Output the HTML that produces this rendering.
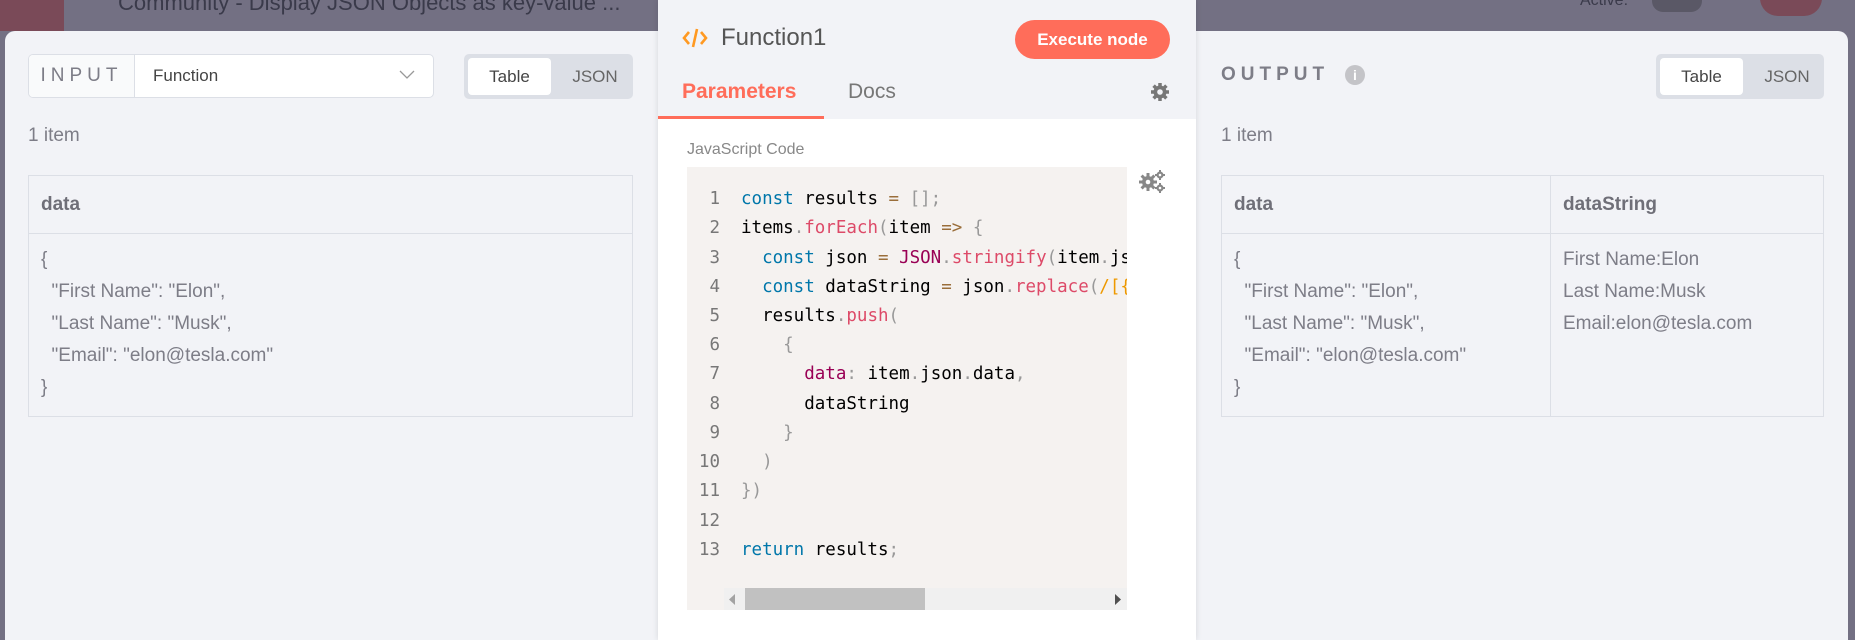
<!DOCTYPE html>
<html><head><meta charset="utf-8"><style>
*{box-sizing:border-box;margin:0;padding:0}
html{width:1855px;height:640px;overflow:hidden}
body{width:1855px;height:640px;overflow:hidden;background:#737083;font-family:"Liberation Sans",sans-serif;position:relative;color:#555}
.abs{position:absolute}
.panel{position:absolute;left:5px;top:31px;width:1843px;height:609px;background:#f2f3f7;border-radius:10px 10px 0 0}
.lbl{font-size:19px;letter-spacing:5px;color:#7d7d87;font-weight:bold}
.sel{left:28px;top:54px;width:406px;height:44px;border:1px solid #dcdfe6;border-radius:5px;background:#fff;overflow:hidden}
.tog{height:45px;width:169px;background:#dcdfe6;border-radius:5px}
.tog .a{position:absolute;left:4px;top:4px;width:83px;height:37px;background:#fff;border-radius:4px;font-size:17px;color:#444;text-align:center;line-height:37px}
.tog .b{position:absolute;left:96px;top:4px;width:70px;line-height:37px;font-size:17px;color:#666;text-align:center}
.items{font-size:19px;color:#7d7d87}
table{border-collapse:collapse;position:absolute;font-size:19px;color:#7d7d87}
td,th{border:1px solid #dcdfe6;text-align:left;vertical-align:top;padding:0 12px}
th{height:58px;vertical-align:middle;font-weight:bold;color:#6f6f78}
td{line-height:32px;padding-top:10px;padding-bottom:8px}
.code{left:687px;top:167px;width:440px;height:443px;background:#f5f2f0;font-family:"DejaVu Sans Mono","Liberation Mono",monospace;font-size:17.5px;overflow:hidden}
.ln{position:absolute;left:0;width:33px;text-align:right;color:#777}
.cl{position:absolute;left:54px;white-space:pre;color:#000}
.k{color:#07a}.f{color:#dd4a68}.p{color:#999}.o{color:#9a6e3a}.m{color:#905}
</style></head><body>
<div class="abs" style="left:0;top:0;width:64px;height:31px;background:#7a4a58"></div>
<div class="abs" style="left:118px;top:-10px;font-size:22px;color:#3a3a4a;white-space:nowrap">Community - Display JSON Objects as key-value ...</div>
<div class="abs" style="left:1580px;top:-8px;font-size:16px;color:#3a3a4a">Active:</div>
<div class="abs" style="left:1652px;top:-10px;width:50px;height:22px;border-radius:11px;background:#5a5866"></div>
<div class="abs" style="left:1760px;top:-20px;width:62px;height:36px;border-radius:18px;background:#7a4a58"></div>

<div class="panel"></div>
<div class="abs sel">
 <div class="abs lbl" style="left:0;top:0;width:106px;height:42px;line-height:42px;text-align:center;background:#f9fafb;border-right:1px solid #dcdfe6;font-weight:normal">INPUT</div>
 <div class="abs" style="left:124px;top:0;line-height:42px;font-size:17px;color:#444">Function</div>
 <svg class="abs" style="left:370px;top:15px" width="16" height="10"><path d="M1 1L8 8L15 1" fill="none" stroke="#999" stroke-width="1.3"/></svg>
</div>
<div class="abs tog" style="left:464px;top:54px"><div class="a">Table</div><div class="b">JSON</div></div>
<div class="abs items" style="left:28px;top:125px">1 item</div>
<table style="left:28px;top:175px;width:605px"><tr><th>data</th></tr>
<tr><td style="height:183px">{<br>&nbsp;&nbsp;"First Name": "Elon",<br>&nbsp;&nbsp;"Last Name": "Musk",<br>&nbsp;&nbsp;"Email": "elon@tesla.com"<br>}</td></tr></table>

<div class="abs" style="left:658px;top:0;width:538px;height:640px;background:#fff;box-shadow:0 0 6px rgba(0,0,0,.12)"></div>
<div class="abs" style="left:658px;top:0;width:538px;height:119px;background:#f2f3f7"></div>
<svg class="abs" style="left:682px;top:27px" width="26" height="22"><path d="M7 5L2 11L7 17M19 5L24 11L19 17" fill="none" stroke="#ff9922" stroke-width="2.6"/><path d="M15 2L11 20" stroke="#ff9922" stroke-width="2.6"/></svg>
<div class="abs" style="left:721px;top:24px;font-size:24px;color:#555">Function1</div>
<div class="abs" style="left:1015px;top:20px;width:155px;height:39px;border-radius:20px;background:#ff6d5a;color:#fff;font-size:17px;font-weight:bold;text-align:center;line-height:39px">Execute node</div>
<div class="abs" style="left:682px;top:80px;font-size:21px;color:#ff6d5a;font-weight:bold">Parameters</div>
<div class="abs" style="left:658px;top:116px;width:166px;height:3px;background:#ff6d5a"></div>
<div class="abs" style="left:848px;top:80px;font-size:21px;color:#777">Docs</div>
<svg class="abs" style="left:1150px;top:82px" width="20" height="20" viewBox="0 0 20 20"><g fill="#777"><circle cx="10" cy="10" r="6.5"/><g stroke="#777" stroke-width="3.5"><path d="M10 1V19M1 10H19M3.6 3.6L16.4 16.4M16.4 3.6L3.6 16.4"/></g></g><circle cx="10" cy="10" r="2.8" fill="#f2f3f7"/></svg>
<div class="abs" style="left:687px;top:141px;font-size:16px;color:#888">JavaScript Code</div>
<div class="abs code">
 <div class="ln" style="top:22px">1</div><div class="cl" style="top:22px"><span class="k">const</span> results <span class="o">=</span> <span class="p">[];</span></div>
 <div class="ln" style="top:51px">2</div><div class="cl" style="top:51px">items<span class="p">.</span><span class="f">forEach</span><span class="p">(</span>item <span class="o">=&gt;</span> <span class="p">{</span></div>
 <div class="ln" style="top:81px">3</div><div class="cl" style="top:81px">  <span class="k">const</span> json <span class="o">=</span> <span class="m">JSON</span><span class="p">.</span><span class="f">stringify</span><span class="p">(</span>item<span class="p">.</span>json<span class="p">.</span>data<span class="p">)</span></div>
 <div class="ln" style="top:110px">4</div><div class="cl" style="top:110px">  <span class="k">const</span> dataString <span class="o">=</span> json<span class="p">.</span><span class="f">replace</span><span class="p">(</span><span style="color:#e90">/[{}]/g</span></div>
 <div class="ln" style="top:139px">5</div><div class="cl" style="top:139px">  results<span class="p">.</span><span class="f">push</span><span class="p">(</span></div>
 <div class="ln" style="top:168px">6</div><div class="cl" style="top:168px"><span class="p">    {</span></div>
 <div class="ln" style="top:197px">7</div><div class="cl" style="top:197px">      <span class="m">data</span><span class="p">:</span> item<span class="p">.</span>json<span class="p">.</span>data<span class="p">,</span></div>
 <div class="ln" style="top:227px">8</div><div class="cl" style="top:227px">      dataString</div>
 <div class="ln" style="top:256px">9</div><div class="cl" style="top:256px"><span class="p">    }</span></div>
 <div class="ln" style="top:285px">10</div><div class="cl" style="top:285px"><span class="p">  )</span></div>
 <div class="ln" style="top:314px">11</div><div class="cl" style="top:314px"><span class="p">})</span></div>
 <div class="ln" style="top:344px">12</div>
 <div class="ln" style="top:373px">13</div><div class="cl" style="top:373px"><span class="k">return</span> results<span class="p">;</span></div>
 <div class="abs" style="left:37px;top:421px;width:403px;height:22px;background:#f0f0f0"></div>
 <div class="abs" style="left:58px;top:421px;width:180px;height:22px;background:#c1c1c1"></div>
 <svg class="abs" style="left:42px;top:427px" width="8" height="11"><path d="M6 0L0 5.5L6 11Z" fill="#a3a3a3"/></svg>
 <svg class="abs" style="left:428px;top:427px" width="8" height="11"><path d="M0 0L6 5.5L0 11Z" fill="#505050"/></svg>
</div>
<svg class="abs" style="left:1138px;top:169px" width="28" height="24" viewBox="0 0 28 24"><g fill="#888"><circle cx="10" cy="13" r="6"/><path d="M10 4V22M1 13H19M3.6 6.6L16.4 19.4M16.4 6.6L3.6 19.4" stroke="#888" stroke-width="3"/><circle cx="22" cy="6" r="3.5"/><circle cx="22" cy="19" r="3.5"/><path d="M22 1V11M17 6H27M22 14V24M17 19H27" stroke="#888" stroke-width="2"/></g><circle cx="10" cy="13" r="2.3" fill="#fff"/><circle cx="22" cy="6" r="1.3" fill="#fff"/><circle cx="22" cy="19" r="1.3" fill="#fff"/></svg>

<div class="abs lbl" style="left:1221px;top:64px">OUTPUT</div>
<div class="abs" style="left:1345px;top:65px;width:20px;height:20px;border-radius:50%;background:#c4c4c8;color:#fff;font-size:14px;font-weight:bold;text-align:center;line-height:20px">i</div>
<div class="abs tog" style="left:1656px;top:54px;width:168px"><div class="a">Table</div><div class="b">JSON</div></div>
<div class="abs items" style="left:1221px;top:125px">1 item</div>
<table style="left:1221px;top:175px;width:603px"><tr><th style="width:329px">data</th><th>dataString</th></tr>
<tr><td style="height:183px">{<br>&nbsp;&nbsp;"First Name": "Elon",<br>&nbsp;&nbsp;"Last Name": "Musk",<br>&nbsp;&nbsp;"Email": "elon@tesla.com"<br>}</td><td>First Name:Elon<br>Last Name:Musk<br>Email:elon@tesla.com</td></tr></table>
</body></html>
